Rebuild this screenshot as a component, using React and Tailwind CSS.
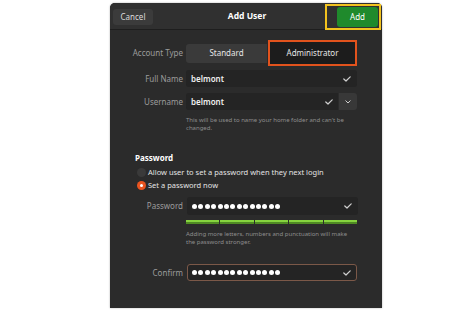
import React from "react";

const font = { fontFamily: '"Noto Sans", "DejaVu Sans", sans-serif' };

function Check({ className = "" }) {
  return (
    <svg width="8" height="6" viewBox="0 0 8 6" className={className}>
      <polyline points="0.8,3 3,5 7.2,0.8" fill="none" stroke="#d0d0d0" strokeWidth="1.2" strokeLinecap="round" strokeLinejoin="round" />
    </svg>
  );
}

function Dots({ n = 14 }) {
  return (
    <div className="flex items-center gap-[1.4px]">
      {Array.from({ length: n }).map((_, i) => (
        <span key={i} className="block w-[5px] h-[5px] rounded-full bg-white" />
      ))}
    </div>
  );
}

function Label({ children }) {
  return (
    <div className="w-[73px] shrink-0 text-right text-[8px] text-[#9c9c9c] leading-none">{children}</div>
  );
}

export default function App() {
  return (
    <div className="w-[474px] h-[312px] bg-white pt-[3px] pl-[110px]" style={font}>
      <div className="w-[272px] h-[305px] bg-[#2b2b2b] rounded-t-[5px] flex flex-col shadow-[0_0_2px_rgba(0,0,0,0.35)]">
        {/* header */}
        <div className="h-[27px] shrink-0 bg-[#303030] border-b border-[#1e1e1e] rounded-t-[5px] grid grid-cols-[1fr_auto_1fr] items-center pl-[3px] pr-[1px]">
          <div className="flex">
            <div className="w-[40px] h-[16px] rounded-[3px] bg-[#3b3b3b] flex items-center justify-center text-[8px] text-[#dcdcdc] leading-none">
              Cancel
            </div>
          </div>
          <div className="text-[8.5px] font-bold text-white leading-none">Add User</div>
          <div className="flex justify-end">
            <div className="w-[56px] h-[26px] mt-[1px] border-2 border-[#f2c21e] flex items-center justify-end pr-[1px]">
              <div className="w-[41px] h-[20px] rounded-[3px] bg-[#1f8a2c] flex items-center justify-center text-[8px] text-white leading-none">
                Add
              </div>
            </div>
          </div>
        </div>

        {/* body */}
        <div className="flex flex-col">
          {/* account type */}
          <div className="mt-[10px] flex items-center gap-[3px] h-[26px]">
            <Label>Account Type</Label>
            <div className="flex items-center w-[171px]">
              <div className="w-[81px] h-[19px] bg-[#3a3a3a] rounded-l-[3px] flex items-center justify-center text-[8px] text-[#e6e6e6] leading-none">
                Standard
              </div>
              <div className="ml-[1px] w-[89px] h-[26px] border-2 border-[#e2531d] bg-[#1c1c1c] flex items-center justify-center text-[8px] text-[#e6e6e6] leading-none">
                Administrator
              </div>
            </div>
          </div>

          {/* full name */}
          <div className="mt-[4px] flex items-center gap-[3px] h-[17px]">
            <Label>Full Name</Label>
            <div className="w-[171px] h-[17px] bg-[#242424] rounded-[3px] flex items-center justify-between pl-[5px] pr-[6px]">
              <span className="text-[8px] font-semibold text-[#f0f0f0] leading-none">belmont</span>
              <Check />
            </div>
          </div>

          {/* username */}
          <div className="mt-[6px] flex items-center gap-[3px] h-[17px]">
            <Label>Username</Label>
            <div className="w-[171px] h-[17px] flex">
              <div className="flex-1 h-full bg-[#242424] rounded-l-[3px] flex items-center justify-between pl-[5px] pr-[5px]">
                <span className="text-[8px] font-semibold text-[#f0f0f0] leading-none">belmont</span>
                <Check />
              </div>
              <div className="w-[18px] h-full bg-[#383838] rounded-r-[3px] ml-[1px] flex items-center justify-center">
                <svg width="6" height="4" viewBox="0 0 6 4">
                  <polyline points="0.8,0.8 3,3 5.2,0.8" fill="none" stroke="#cfcfcf" strokeWidth="1" strokeLinecap="round" strokeLinejoin="round" />
                </svg>
              </div>
            </div>
          </div>

          <div className="mt-[6px] ml-[76px] text-[6px] leading-[8px] text-[#8e8e8e] whitespace-nowrap">
            This will be used to name your home folder and can't be
            <br />
            changed.
          </div>

          {/* password section */}
          <div className="mt-[22px] ml-[25px] text-[8px] font-bold text-white leading-none">Password</div>

          <div className="mt-[6px] ml-[27px] flex items-center gap-[2px] h-[9px]">
            <span className="block w-[9px] h-[9px] rounded-full bg-[#3a3a3a]" />
            <span className="text-[7.5px] text-[#e4e4e4] leading-none">Allow user to set a password when they next login</span>
          </div>
          <div className="mt-[4px] ml-[27px] flex items-center gap-[2px] h-[9px]">
            <span className="w-[9px] h-[9px] rounded-full bg-[#e95420] flex items-center justify-center">
              <span className="block w-[3px] h-[3px] rounded-full bg-white" />
            </span>
            <span className="text-[7.5px] text-[#e4e4e4] leading-none">Set a password now</span>
          </div>

          <div className="mt-[7px] flex items-center gap-[4px] h-[18px]">
            <Label>Password</Label>
            <div className="w-[171px] h-[18px] bg-[#242424] rounded-[3px] flex items-center justify-between pl-[5px] pr-[6px]">
              <Dots />
              <Check />
            </div>
          </div>

          <div className="mt-[5px] ml-[76px] w-[171px] h-[4px] flex gap-[1px]">
            {[0, 1, 2, 3, 4].map((i) => (
              <div key={i} className="flex-1 flex flex-col">
                <div className="h-[2px] bg-[#86d33f]" />
                <div className="h-[2px] bg-[#4f8a23]" />
              </div>
            ))}
          </div>

          <div className="mt-[6px] ml-[76px] text-[6px] leading-[8px] text-[#8e8e8e] whitespace-nowrap">
            Adding more letters, numbers and punctuation will make
            <br />
            the password stronger.
          </div>

          <div className="mt-[18px] flex items-center gap-[4px] h-[17px]">
            <Label>Confirm</Label>
            <div className="w-[170px] h-[17px] bg-[#242424] rounded-[3px] border border-[#7b5848] flex items-center justify-between pl-[4px] pr-[5px]">
              <Dots />
              <Check />
            </div>
          </div>
        </div>
      </div>
    </div>
  );
}
